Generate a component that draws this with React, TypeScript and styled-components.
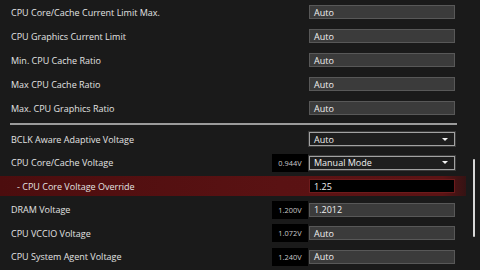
import styled, { createGlobalStyle } from "styled-components";

const Global = createGlobalStyle`
    html, body {
        margin: 0;
        padding: 0;
        background: #1a1a1a;
    }
    body {
        font-family: "Open Sans", "Noto Sans", "DejaVu Sans", sans-serif;
        color: #e2e2e2;
    }
`;

const Screen = styled.div`
    width: 480px;
    height: 270px;
    display: flex;
    flex-direction: row;
    overflow: hidden;
    background: #1a1a1a;
`;

const Content = styled.div`
    width: 466px;
    display: flex;
    flex-direction: column;
    padding-top: 2px;
`;

const Section = styled.div<{ $gap: number }>`
    display: flex;
    flex-direction: column;
    gap: ${p => p.$gap}px;
`;

const Row = styled.div<{ $active?: boolean }>`
    height: 20px;
    display: flex;
    flex-direction: row;
    align-items: center;
    padding: 0 11px;
    background: ${p => p.$active
        ? "linear-gradient(90deg, #4c0d0e 0%, #5a1213 60%, #5c1314 95%, rgba(70, 14, 15, 0.6) 100%)"
        : "transparent"};

    .label {
        flex: 1;
        font-size: 9px;
        white-space: nowrap;
        padding-left: ${p => p.$active ? "6px" : "0"};
    }
`;

const Divider = styled.div`
    height: 2px;
    margin: 5px 9px 4px 10px;
    background: #9b9b9b;
`;

const VoltTag = styled.div`
    width: 36px;
    height: 18px;
    margin-right: 1px;
    background: #000;
    color: #c8c8c8;
    font-size: 7.4px;
    display: flex;
    align-items: center;
    justify-content: center;
`;

const Field = styled.div<{ $kind: "input" | "select" | "edit" }>`
    box-sizing: border-box;
    width: 146px;
    height: 14px;
    display: flex;
    align-items: center;
    justify-content: space-between;
    padding: 0 6px 0 4px;
    font-size: 9px;
    color: #f0f0f0;
    background: ${p => p.$kind === "select" ? "#1e1e1e" : p.$kind === "edit" ? "#000" : "#3b3b3b"};
    border: 1px solid ${p => p.$kind === "select" ? "#a2a2a2" : p.$kind === "edit" ? "#6d1b1c" : "#585858"};
    ${p => p.$kind === "select" && "outline: 1px solid #3a3a3a;"}
`;

const Caret = styled.span`
    width: 0;
    height: 0;
    border-left: 3px solid transparent;
    border-right: 3px solid transparent;
    border-top: 3px solid #f2f2f2;
`;

const ScrollTrack = styled.div`
    flex: 1;
    position: relative;
`;

const Thumb = styled.div`
    position: absolute;
    left: 7px;
    top: 159px;
    width: 2px;
    height: 78px;
    border-radius: 1px;
    background: #d8d8d8;
`;

type Item = {
    label: string;
    value: string;
    kind: "input" | "select" | "edit";
    volt?: string;
    active?: boolean;
};

const upper: Item[] = [
    { label: "CPU Core/Cache Current Limit Max.", value: "Auto", kind: "input" },
    { label: "CPU Graphics Current Limit", value: "Auto", kind: "input" },
    { label: "Min. CPU Cache Ratio", value: "Auto", kind: "input" },
    { label: "Max CPU Cache Ratio", value: "Auto", kind: "input" },
    { label: "Max. CPU Graphics Ratio", value: "Auto", kind: "input" },
];

const lower: Item[] = [
    { label: "BCLK Aware Adaptive Voltage", value: "Auto", kind: "select" },
    { label: "CPU Core/Cache Voltage", value: "Manual Mode", kind: "select", volt: "0.944V" },
    { label: "- CPU Core Voltage Override", value: "1.25", kind: "edit", active: true },
    { label: "DRAM Voltage", value: "1.2012", kind: "input", volt: "1.200V" },
    { label: "CPU VCCIO Voltage", value: "Auto", kind: "input", volt: "1.072V" },
    { label: "CPU System Agent Voltage", value: "Auto", kind: "input", volt: "1.240V" },
];

function SettingRow({ item }: { item: Item }) {
    return (
        <Row $active={item.active}>
            <div className="label">{item.label}</div>
            {item.volt && <VoltTag>{item.volt}</VoltTag>}
            <Field $kind={item.kind}>
                <span>{item.value}</span>
                {item.kind === "select" && <Caret />}
            </Field>
        </Row>
    );
}

export default function App() {
    return (
        <>
            <Global />
            <Screen>
                <Content>
                    <Section $gap={4}>
                        {upper.map(i => <SettingRow key={i.label} item={i} />)}
                    </Section>
                    <Divider />
                    <Section $gap={3.6}>
                        {lower.map(i => <SettingRow key={i.label} item={i} />)}
                    </Section>
                </Content>
                <ScrollTrack>
                    <Thumb />
                </ScrollTrack>
            </Screen>
        </>
    );
}
